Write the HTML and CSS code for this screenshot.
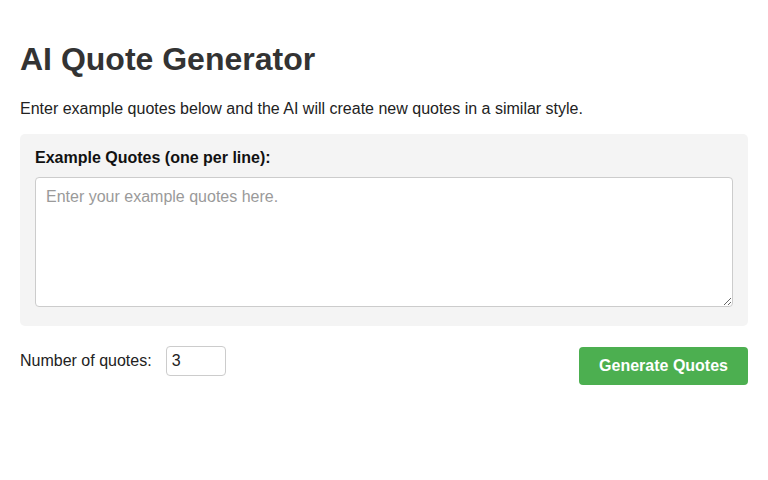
FILE: index.html
```html
<!DOCTYPE html>
<html lang="en">
<head>
<meta charset="utf-8">
<title>AI Quote Generator</title>
<link rel="stylesheet" href="styles.css">
</head>
<body>
<div class="container">
  <h1 class="title">AI Quote Generator</h1>
  <p class="intro">Enter example quotes below and the AI will create new quotes in a similar style.</p>
  <div class="panel">
    <label class="panel-label" for="examples">Example Quotes (one per line):</label>
    <textarea id="examples" class="examples" placeholder="Enter your example quotes here."></textarea>
  </div>
  <div class="controls">
    <div class="count-group">
      <label class="count-label" for="count">Number of quotes:</label>
      <input id="count" class="count-input" type="number" value="3">
    </div>
    <button class="generate-btn">Generate Quotes</button>
  </div>
</div>
</body>
</html>
```

FILE: styles.css
```css
html, body {
  margin: 0;
  padding: 0;
  background: #fff;
}
body {
  font-family: "Liberation Sans", Arial, sans-serif;
  color: #222;
}
.container {
  padding: 20px;
}
.title {
  font-size: 32px;
  font-weight: bold;
  color: #333;
  margin: 0.67em 0;
}
.intro {
  font-size: 16px;
  margin: 16px 0;
  color: #222;
}
.panel {
  background: #f4f4f4;
  border-radius: 5px;
  padding: 15px 15px 19px;
  margin-bottom: 20px;
}
.panel-label {
  display: block;
  font-weight: bold;
  font-size: 16px;
  color: #111;
  margin-bottom: 10px;
}
.examples {
  display: block;
  width: 100%;
  height: 130px;
  box-sizing: border-box;
  padding: 10px;
  border: 1px solid #ccc;
  border-radius: 4px;
  font-family: "Liberation Sans", Arial, sans-serif;
  font-size: 16px;
  background: #fff;
  margin: 0;
}
.examples::placeholder {
  color: #9a9a9a;
}
.controls {
  display: flex;
  justify-content: space-between;
  align-items: flex-start;
}
.count-group {
  display: flex;
  align-items: center;
  gap: 14px;
}
.count-label {
  font-size: 16px;
  color: #222;
}
.count-input {
  width: 60px;
  height: 30px;
  box-sizing: border-box;
  padding: 5px;
  border: 1px solid #ccc;
  border-radius: 4px;
  font-family: "Liberation Sans", Arial, sans-serif;
  font-size: 16px;
  color: #222;
  background: #fff;
  -moz-appearance: textfield;
}
.count-input::-webkit-inner-spin-button,
.count-input::-webkit-outer-spin-button {
  -webkit-appearance: none;
  margin: 0;
}
.generate-btn {
  margin-top: 1px;
  padding: 10px 20px;
  background: #4caf50;
  color: #fff;
  border: none;
  border-radius: 4px;
  font-family: "Liberation Sans", Arial, sans-serif;
  font-size: 16px;
  font-weight: bold;
  line-height: 18px;
  cursor: pointer;
}
```
